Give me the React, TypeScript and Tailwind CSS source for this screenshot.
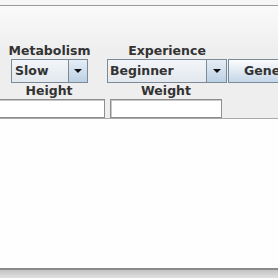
export default function App() {
  const font = { fontFamily: '"DejaVu Sans", sans-serif' };
  return (
    <div
      className="w-[278px] h-[278px] overflow-hidden flex flex-col bg-white text-[#333333] font-bold text-[12.5px]"
      style={font}
    >
      {/* title strip */}
      <div className="h-[5px] bg-[#f6f6f6]" />
      <div className="h-[1px] bg-[#9a9a9a]" />

      <div className="bg-gradient-to-b from-[#fafafa] via-[#eeeeee] via-40% to-[#eeeeee] pt-[37px] border-b border-[#a8a8a8]">
        {/* row 1: labels + combos */}
        <div className="flex pl-[11px] items-end">
          <div className="w-[77px] flex flex-col items-center">
            <span className="leading-[16px] whitespace-nowrap">Metabolism</span>
            <div className="w-[77px] h-[24px] flex border border-[#7a8a99] bg-gradient-to-b from-[#f3f5f8] to-[#e3e8ee]">
              <span className="flex-1 pl-[3px] leading-[22px]">Slow</span>
              <div className="w-[19px] h-full border-l border-[#7a8a99] bg-gradient-to-b from-[#e6eef6] to-[#bcd0e4] flex items-center justify-center">
                <div className="w-0 h-0 border-l-[4px] border-r-[4px] border-t-[4px] border-l-transparent border-r-transparent border-t-[#111]" />
              </div>
            </div>
          </div>
          <div className="ml-[19px] w-[120px] flex flex-col items-center">
            <span className="leading-[16px] whitespace-nowrap">Experience</span>
            <div className="w-[120px] h-[24px] flex border border-[#7a8a99] bg-gradient-to-b from-[#f3f5f8] to-[#e3e8ee]">
              <span className="flex-1 pl-[2px] leading-[22px]">Beginner</span>
              <div className="w-[20px] h-full border-l border-[#7a8a99] bg-gradient-to-b from-[#e6eef6] to-[#bcd0e4] flex items-center justify-center">
                <div className="w-0 h-0 border-l-[4px] border-r-[4px] border-t-[4px] border-l-transparent border-r-transparent border-t-[#111]" />
              </div>
            </div>
          </div>
          <div className="ml-[1px] w-[80px] shrink-0 h-[24px] border border-[#7a8a99] bg-gradient-to-b from-[#fcfdfe] to-[#c4d6e8] flex items-center pl-[15px] leading-[22px] whitespace-nowrap">
            Generate
          </div>
        </div>

        {/* row 2: height / weight */}
        <div className="flex ml-[-7px] gap-[5px]">
          <div className="w-[112px] flex flex-col items-center">
            <span className="leading-[16px]">Height</span>
            <div className="w-[112px] h-[19px] bg-white border border-[#8e8e8e] shadow-[inset_1px_1px_0_#c8c8c8]" />
          </div>
          <div className="w-[112px] flex flex-col items-center">
            <span className="leading-[16px]">Weight</span>
            <div className="w-[112px] h-[19px] bg-white border border-[#8e8e8e] shadow-[inset_1px_1px_0_#c8c8c8]" />
          </div>
        </div>
      </div>

      <div className="flex-1 bg-[#fefefe]" />
      <div className="h-[2px] bg-[#8a8a8a]" />
      <div className="h-[8px] bg-gradient-to-b from-[#c4c4c4] to-[#e0e0e0]" />
    </div>
  );
}
